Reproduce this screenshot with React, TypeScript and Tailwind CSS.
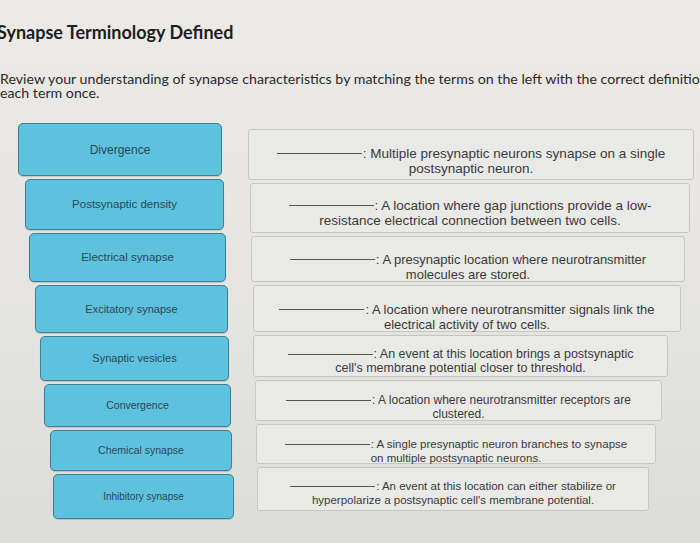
const terms = [
  { label: "Divergence", box: "ml-[18px] w-[204px] h-[53px] text-[12px]" },
  { label: "Postsynaptic density", box: "ml-[25px] w-[199px] h-[51px] text-[11.5px]" },
  { label: "Electrical synapse", box: "ml-[29px] w-[197px] h-[49px] text-[11.5px]" },
  { label: "Excitatory synapse", box: "ml-[35px] w-[193px] h-[48px] text-[11px]" },
  { label: "Synaptic vesicles", box: "ml-[40px] w-[189px] h-[45px] text-[11px]" },
  { label: "Convergence", box: "ml-[44px] w-[187px] h-[43px] text-[10.5px]" },
  { label: "Chemical synapse", box: "ml-[50px] w-[182px] h-[41px] text-[10.5px]" },
  { label: "Inhibitory synapse", box: "ml-[53px] w-[181px] h-[45px] text-[10px]" },
];

// each target box keeps its own size, inset and type size
const definitions = [
  {
    first: "Multiple presynaptic neurons synapse on a single",
    rest: "postsynaptic neuron.",
    box: "ml-[248px] w-[446px] h-[51px] pt-[16px] text-[13.5px] leading-[15px]",
  },
  {
    first: "A location where gap junctions provide a low-",
    rest: "resistance electrical connection between two cells.",
    box: "ml-[250px] w-[440px] h-[50px] pt-[14px] text-[13.5px] leading-[15px]",
  },
  {
    first: "A presynaptic location where neurotransmitter",
    rest: "molecules are stored.",
    box: "ml-[251px] w-[434px] h-[46px] pt-[15px] text-[13px] leading-[15px]",
  },
  {
    first: "A location where neurotransmitter signals link the",
    rest: "electrical activity of two cells.",
    box: "ml-[253px] w-[428px] h-[47px] pt-[16px] text-[13px] leading-[15px]",
  },
  {
    first: "An event at this location brings a postsynaptic",
    rest: "cell's membrane potential closer to threshold.",
    box: "ml-[253px] w-[415px] h-[42px] pt-[11px] text-[12.5px] leading-[14px]",
  },
  {
    first: "A location where neurotransmitter receptors are",
    rest: "clustered.",
    box: "ml-[255px] w-[407px] h-[41px] pt-[12px] text-[12px] leading-[14px]",
  },
  {
    first: "A single presynaptic neuron branches to synapse",
    rest: "on multiple postsynaptic neurons.",
    box: "ml-[256px] w-[400px] h-[40px] pt-[12px] text-[11.5px] leading-[14px]",
  },
  {
    first: "An event at this location can either stabilize or",
    rest: "hyperpolarize a postsynaptic cell's membrane potential.",
    box: "ml-[257px] w-[392px] h-[44px] pt-[11px] text-[11.5px] leading-[14px]",
  },
];

export default function App() {
  return (
    <div className="w-[700px] h-[543px] overflow-hidden bg-gradient-to-b from-[#ebeae6] via-[#e6e5e2] to-[#dcdcda] text-[#222] font-['Liberation_Sans',Arial,sans-serif]">
      <h1 className="ml-[-3px] pt-[21px] text-[18px] leading-[22px] font-bold text-[#1e1e1e] font-['Lato','Liberation_Sans',sans-serif] whitespace-nowrap">
        Synapse Terminology Defined
      </h1>

      <p className="mt-[29px] text-[14.2px] leading-[14px] text-[#2a2a2a] font-['Lato','Liberation_Sans',sans-serif] whitespace-nowrap">
        Review your understanding of synapse characteristics by matching the terms on the left with the correct definitions. Use
        <br />
        each term once.
      </p>

      <div className="relative mt-[23px]">
        {/* draggable term cards */}
        <div className="flex flex-col gap-[3px]">
          {terms.map((t) => (
            <div
              key={t.label}
              className={`${t.box} flex items-center justify-center rounded-[5px] border-[1.5px] border-[#3c7f96] bg-[#5ec2df] text-[#284858] shadow-[0_1px_1px_rgba(0,0,0,0.15)]`}
            >
              {t.label}
            </div>
          ))}
        </div>

        {/* drop targets with definitions */}
        <div className="absolute left-0 top-[6px] flex flex-col gap-[3px]">
          {definitions.map((d) => (
            <div
              key={d.first}
              className={`${d.box} flex flex-col items-center rounded-[3px] border border-[#c6c6c4] bg-[#e9e9e7] text-[#3a3a3a]`}
            >
              <div className="whitespace-nowrap">
                <span className="inline-block w-[85px] h-[8px] align-top border-b border-[#555] mr-[1px]" />
                : {d.first}
              </div>
              <div className="whitespace-nowrap">{d.rest}</div>
            </div>
          ))}
        </div>
      </div>
    </div>
  );
}
